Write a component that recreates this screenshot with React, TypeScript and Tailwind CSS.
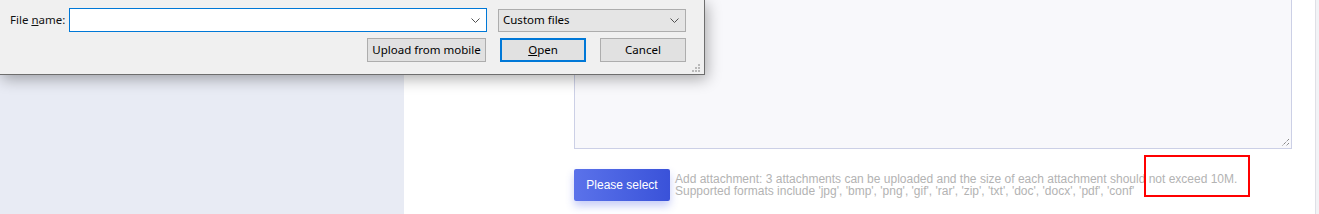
import React from "react";

function Chevron() {
    return (
        <svg width="9" height="5" viewBox="0 0 9 5" className="shrink-0">
            <path d="M0.5 0.5 L4.5 4.5 L8.5 0.5" fill="none" stroke="#505050" strokeWidth="1" />
        </svg>
    );
}

function Grip() {
    // resize grip dots, bottom-right of the dialog
    const dots = [
        [6, 0],
        [3, 3], [6, 3],
        [0, 6], [3, 6], [6, 6],
    ];
    return (
        <svg width="8" height="8" viewBox="0 0 8 8">
            {dots.map(([x, y], i) => (
                <rect key={i} x={x} y={y} width="2" height="2" fill="#b9b9b9" />
            ))}
        </svg>
    );
}

function FileDialog() {
    const btn =
        "flex h-[24px] items-center justify-center border border-[#adadad] bg-[#e1e1e1] text-[11.5px] text-black";

    return (
        <div
            className="absolute top-0 left-0 h-[75px] w-[705px] border-r border-b border-[#6e6e6e] bg-[#f0f0f0] shadow-[2px_4px_14px_rgba(0,0,0,0.32)]"
            style={{ fontFamily: '"Noto Sans", "Liberation Sans", sans-serif' }}
        >
            <div className="flex items-center pt-[8px]">
                <label className="w-[69px] pl-[10px] text-[11.5px] leading-none text-[#111]">
                    File <span className="underline">n</span>ame:
                </label>
                <div className="flex h-[24px] w-[418px] items-center justify-end border border-[#0078d7] bg-white pr-[6px]">
                    <Chevron />
                </div>
                <div className="ml-[11px] flex h-[23px] w-[188px] items-center justify-between border border-[#adadad] bg-[#e5e5e5] pr-[6px] pl-[4px] text-[11.5px] text-black">
                    <span>Custom files</span>
                    <Chevron />
                </div>
            </div>

            <div className="mt-[6px] flex justify-end gap-[14px] pr-[18px]">
                <button className={`${btn} w-[119px]`}>Upload from mobile</button>
                <button className="flex h-[24px] w-[86px] items-center justify-center border-2 border-[#0078d7] bg-[#e1e1e1] text-[11.5px] text-black">
                    <span className="underline">O</span>pen
                </button>
                <button className={`${btn} w-[86px]`}>Cancel</button>
            </div>

            <div className="absolute right-[4px] bottom-[2px]">
                <Grip />
            </div>
        </div>
    );
}

export default function App() {
    return (
        <div className="relative flex h-[214px] w-[1319px] overflow-hidden bg-white">
            {/* Sidebar */}
            <div className="h-full w-[404px] shrink-0 bg-[#e8ebf4]" />

            {/* Main content */}
            <div className="flex-1 pl-[170px]" style={{ fontFamily: '"Liberation Sans", Arial, sans-serif' }}>
                <div className="relative -mt-[20px] h-[169px] w-[718px] border border-[#ccd0e6] bg-[#f8f8fb]">
                    <svg width="9" height="9" viewBox="0 0 9 9" className="absolute right-[1px] bottom-[1px]">
                        <path d="M8 1 L1 8 M8 5 L5 8" stroke="#555" strokeWidth="1" strokeDasharray="1 1" />
                    </svg>
                </div>

                <div className="mt-[20px] flex items-center gap-[5px]">
                    <button className="h-[32px] w-[96px] shrink-0 rounded-[2px] bg-gradient-to-r from-[#5b72ea] to-[#3a52d9] text-[12px] text-white shadow-[0_5px_8px_rgba(70,90,230,0.3)]">
                        Please select
                    </button>
                    <div className="text-[12px] leading-[12px] whitespace-nowrap text-[#b3b3b3]">
                        <p>Add attachment: 3 attachments can be uploaded and the size of each attachment should not exceed 10M.</p>
                        <p>Supported formats include 'jpg', 'bmp', 'png', 'gif', 'rar', 'zip', 'txt', 'doc', 'docx', 'pdf', 'conf'</p>
                    </div>
                </div>
            </div>

            {/* Scrollbar edge */}
            <div className="h-full w-[4px] shrink-0 border-l border-[#dfe0e6] bg-[#f2f3f6]" />

            {/* Annotation box */}
            <div className="absolute top-[155px] left-[1144px] h-[42px] w-[106px] border-2 border-[#ff0000]" />

            <FileDialog />
        </div>
    );
}
